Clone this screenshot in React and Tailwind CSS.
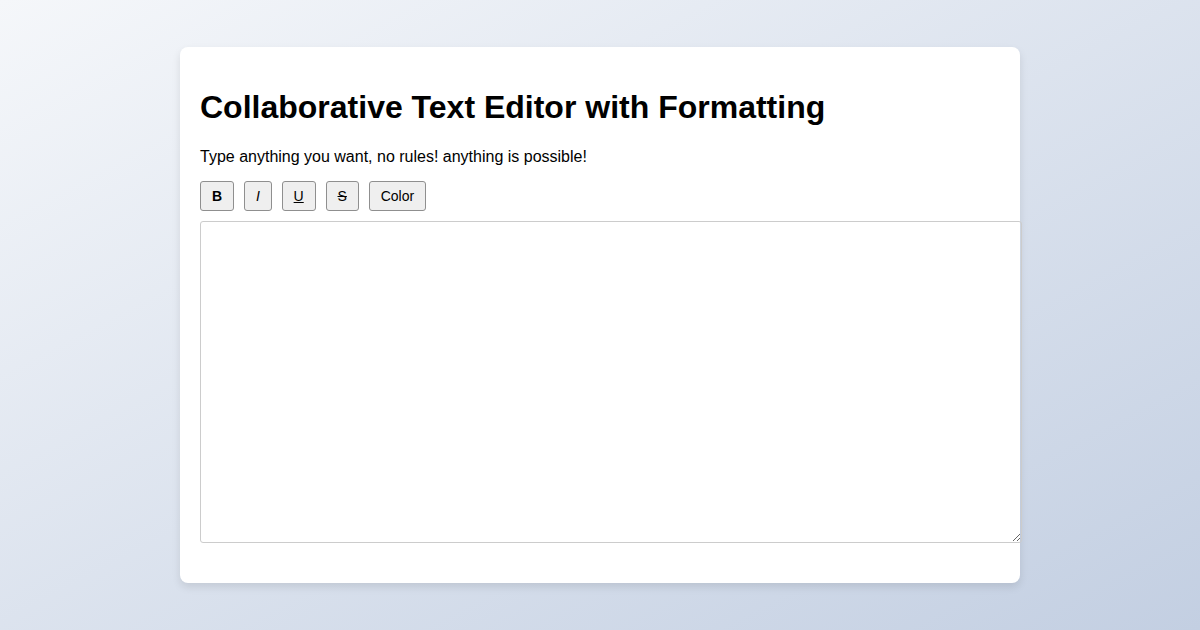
import React, { useState } from "react";

const tools = [
  { label: "B", cls: "font-bold" },
  { label: "I", cls: "italic" },
  { label: "U", cls: "underline" },
  { label: "S", cls: "line-through" },
  { label: "Color", cls: "" },
];

export default function App() {
  const [text, setText] = useState("");

  return (
    <div
      className="min-h-screen flex items-center justify-center bg-gradient-to-br from-[#f5f7fa] to-[#c3cfe2] text-black"
      style={{ fontFamily: '"Liberation Sans", Arial, sans-serif' }}
    >
      <div className="w-[840px] box-border bg-white rounded-lg shadow-[0_4px_8px_rgba(0,0,0,0.1)] px-5 pt-5 pb-[40px]">
        <h1 className="text-[32px] font-bold leading-[36.8px] mt-[22.5px] mb-[21.5px]">
          Collaborative Text Editor with Formatting
        </h1>
        <p className="text-base leading-[18.4px] mb-[15px]">
          Type anything you want, no rules! anything is possible!
        </p>
        <div className="flex gap-[9.8px] mb-[10px]">
          {tools.map((t) => (
            <button
              key={t.label}
              className={`text-[14px] leading-[16px] px-[11px] py-[6px] bg-[#efefef] border border-[#8f8f8f] rounded-[3px] ${t.cls}`}
            >
              {t.label}
            </button>
          ))}
        </div>
        <textarea
          value={text}
          onChange={(e) => setText(e.target.value)}
          className="block box-content w-full h-[300px] p-[10px] border border-[#cccccc] rounded-[3px] text-base outline-none resize"
        />
      </div>
    </div>
  );
}
